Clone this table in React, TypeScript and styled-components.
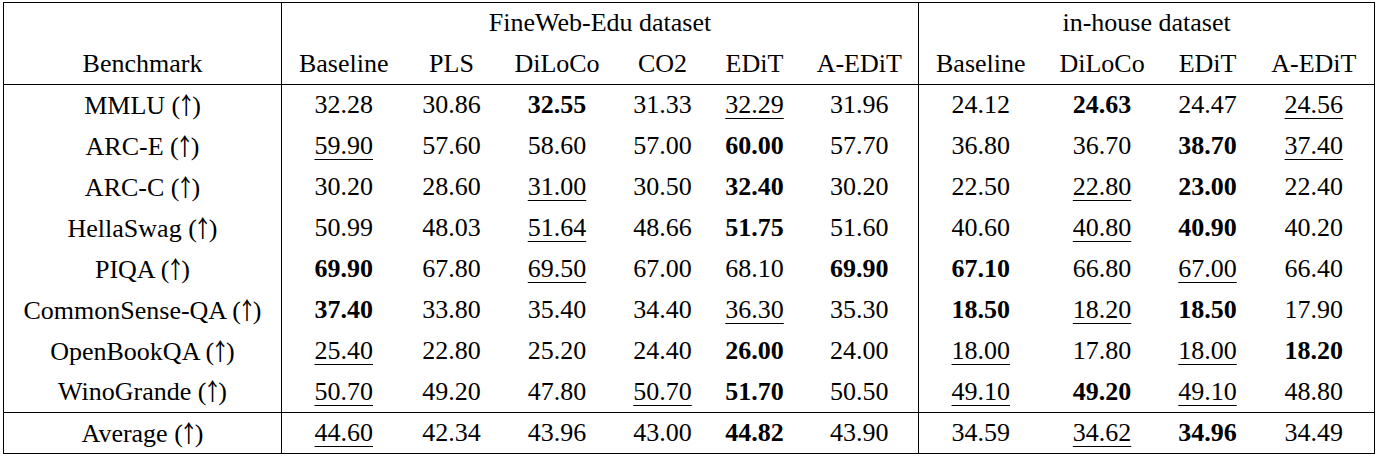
import styled, { createGlobalStyle } from 'styled-components'

const GlobalStyle = createGlobalStyle`
  html, body {
    margin: 0;
    padding: 0;
    background: #fff;
  }
`

type Mark = 'plain' | 'bold' | 'under'

const fineWebCols = ['Baseline', 'PLS', 'DiLoCo', 'CO2', 'EDiT', 'A-EDiT']
const houseCols = ['Baseline', 'DiLoCo', 'EDiT', 'A-EDiT']

// column widths measured from the reference (px)
const widths = [278, 124, 92, 119, 92, 92, 118, 124, 119, 92, 121]

// "*" = best (bold), "_" = second (underlined)
const rows: [string, string[]][] = [
  ['MMLU', ['32.28', '30.86', '*32.55', '31.33', '_32.29', '31.96', '24.12', '*24.63', '24.47', '_24.56']],
  ['ARC-E', ['_59.90', '57.60', '58.60', '57.00', '*60.00', '57.70', '36.80', '36.70', '*38.70', '_37.40']],
  ['ARC-C', ['30.20', '28.60', '_31.00', '30.50', '*32.40', '30.20', '22.50', '_22.80', '*23.00', '22.40']],
  ['HellaSwag', ['50.99', '48.03', '_51.64', '48.66', '*51.75', '51.60', '40.60', '_40.80', '*40.90', '40.20']],
  ['PIQA', ['*69.90', '67.80', '_69.50', '67.00', '68.10', '*69.90', '*67.10', '66.80', '_67.00', '66.40']],
  ['CommonSense-QA', ['*37.40', '33.80', '35.40', '34.40', '_36.30', '35.30', '*18.50', '_18.20', '*18.50', '17.90']],
  ['OpenBookQA', ['_25.40', '22.80', '25.20', '24.40', '*26.00', '24.00', '_18.00', '17.80', '_18.00', '*18.20']],
  ['WinoGrande', ['_50.70', '49.20', '47.80', '_50.70', '*51.70', '50.50', '_49.10', '*49.20', '_49.10', '48.80']],
]

const average: string[] = ['_44.60', '42.34', '43.96', '43.00', '*44.82', '43.90', '34.59', '_34.62', '*34.96', '34.49']

const Page = styled.div`
  padding: 2px 0 0 3px;
  font-family: 'Liberation Serif', 'Times New Roman', serif;
  color: #000;
`

const Table = styled.table`
  border-collapse: collapse;
  table-layout: fixed;
  width: 1371px;
  border: 1px solid #000;
  font-size: 26px;
`

const Col = styled.col<{ $w: number }>`
  width: ${(p) => p.$w}px;
`

const Row = styled.tr<{ $topRule?: boolean }>`
  height: 41px;
  border-top: ${(p) => (p.$topRule ? '1px solid #000' : 'none')};
`

const HeadRow = styled(Row)`
  & + & {
    border-bottom: 1px solid #000;
  }
`

const Cell = styled.td<{ $divider?: boolean }>`
  padding: 0;
  text-align: center;
  vertical-align: middle;
  white-space: nowrap;
  line-height: 1;
  border-right: ${(p) => (p.$divider ? '1px solid #000' : 'none')};
`

// thin half-width up arrow, close to the LaTeX \uparrow
const Arrow = styled.span`
  font-family: 'Noto Sans CJK JP', 'DejaVu Sans', sans-serif;
  font-size: 0.92em;
`

const Value = styled.span<{ $mark: Mark }>`
  font-weight: ${(p) => (p.$mark === 'bold' ? 700 : 400)};
  text-decoration: ${(p) => (p.$mark === 'under' ? 'underline' : 'none')};
  text-decoration-thickness: 1px;
  text-underline-offset: 5px;
`

const parse = (raw: string): [string, Mark] => {
  if (raw.startsWith('*')) return [raw.slice(1), 'bold']
  if (raw.startsWith('_')) return [raw.slice(1), 'under']
  return [raw, 'plain']
}

const ValueCells = ({ values }: { values: string[] }) => (
  <>
    {values.map((raw, i) => {
      const [text, mark] = parse(raw)
      return (
        <Cell key={i} $divider={i === 5}>
          <Value $mark={mark}>{text}</Value>
        </Cell>
      )
    })}
  </>
)

const Metric = ({ name }: { name: string }) => (
  <>
    {name} (<Arrow>￪</Arrow>)
  </>
)

export default function App() {
  return (
    <Page>
      <GlobalStyle />
      <Table>
        <colgroup>
          {widths.map((w, i) => (
            <Col key={i} $w={w} />
          ))}
        </colgroup>
        <thead>
          <HeadRow>
            <Cell $divider />
            <Cell colSpan={6} $divider>FineWeb-Edu dataset</Cell>
            <Cell colSpan={4}>in-house dataset</Cell>
          </HeadRow>
          <HeadRow>
            <Cell $divider>Benchmark</Cell>
            {fineWebCols.map((c, i) => (
              <Cell key={c} $divider={i === 5}>{c}</Cell>
            ))}
            {houseCols.map((c) => (
              <Cell key={c}>{c}</Cell>
            ))}
          </HeadRow>
        </thead>
        <tbody>
          {rows.map(([name, values]) => (
            <Row key={name}>
              <Cell $divider>
                <Metric name={name} />
              </Cell>
              <ValueCells values={values} />
            </Row>
          ))}
          <Row $topRule>
            <Cell $divider>
              <Metric name="Average" />
            </Cell>
            <ValueCells values={average} />
          </Row>
        </tbody>
      </Table>
    </Page>
  )
}
